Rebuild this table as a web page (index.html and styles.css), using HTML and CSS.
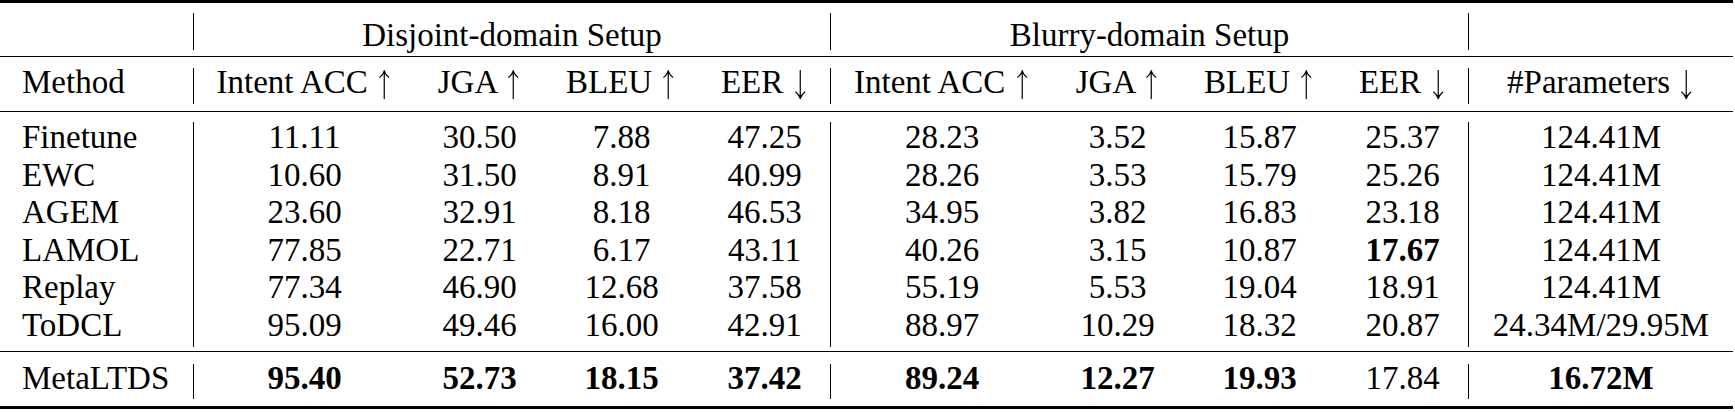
FILE: index.html
```html
<!DOCTYPE html>
<html lang="en">
<head>
    <meta charset="UTF-8">
    <meta name="viewport" content="width=device-width, initial-scale=1.0">
    <title>Continual Learning Results</title>
    <link rel="stylesheet" href="styles.css">
</head>
<body>
    <!-- arrow glyphs, reused below -->
    <svg class="defs" width="0" height="0">
        <symbol id="up" viewBox="0 0 16.5 29.3">
            <path d="M8.25 1.2 V29.3 M3.4 7.6 Q7.2 4.6 8.25 0.8 Q9.3 4.6 13.1 7.6" fill="none" stroke="#000" stroke-width="1.2"/>
        </symbol>
        <symbol id="down" viewBox="0 0 16.5 29.3">
            <path d="M8.25 0 V28.1 M3.4 21.7 Q7.2 24.7 8.25 28.5 Q9.3 24.7 13.1 21.7" fill="none" stroke="#000" stroke-width="1.2"/>
        </symbol>
    </svg>

    <div class="results">
        <!-- group titles -->
        <div class="group g-top">
            <div class="row">
                <div class="c name"></div>
                <div class="c sep span4">Disjoint-domain Setup</div>
                <div class="c sep span4">Blurry-domain Setup</div>
                <div class="c sep"></div>
            </div>
        </div>

        <!-- column titles -->
        <div class="group g-head">
            <div class="row">
                <div class="c name">Method</div>
                <div class="c sep">Intent ACC <svg class="arr"><use href="#up"/></svg></div>
                <div class="c">JGA <svg class="arr"><use href="#up"/></svg></div>
                <div class="c">BLEU <svg class="arr"><use href="#up"/></svg></div>
                <div class="c">EER <svg class="arr"><use href="#down"/></svg></div>
                <div class="c sep">Intent ACC <svg class="arr"><use href="#up"/></svg></div>
                <div class="c">JGA <svg class="arr"><use href="#up"/></svg></div>
                <div class="c">BLEU <svg class="arr"><use href="#up"/></svg></div>
                <div class="c">EER <svg class="arr"><use href="#down"/></svg></div>
                <div class="c sep">#Parameters <svg class="arr"><use href="#down"/></svg></div>
            </div>
        </div>

        <!-- baselines -->
        <div class="group g-body">
            <div class="row">
                <div class="c name">Finetune</div>
                <div class="c sep">11.11</div><div class="c">30.50</div><div class="c">7.88</div><div class="c">47.25</div>
                <div class="c sep">28.23</div><div class="c">3.52</div><div class="c">15.87</div><div class="c">25.37</div>
                <div class="c sep">124.41M</div>
            </div>
            <div class="row">
                <div class="c name">EWC</div>
                <div class="c sep">10.60</div><div class="c">31.50</div><div class="c">8.91</div><div class="c">40.99</div>
                <div class="c sep">28.26</div><div class="c">3.53</div><div class="c">15.79</div><div class="c">25.26</div>
                <div class="c sep">124.41M</div>
            </div>
            <div class="row">
                <div class="c name">AGEM</div>
                <div class="c sep">23.60</div><div class="c">32.91</div><div class="c">8.18</div><div class="c">46.53</div>
                <div class="c sep">34.95</div><div class="c">3.82</div><div class="c">16.83</div><div class="c">23.18</div>
                <div class="c sep">124.41M</div>
            </div>
            <div class="row">
                <div class="c name">LAMOL</div>
                <div class="c sep">77.85</div><div class="c">22.71</div><div class="c">6.17</div><div class="c">43.11</div>
                <div class="c sep">40.26</div><div class="c">3.15</div><div class="c">10.87</div><div class="c best">17.67</div>
                <div class="c sep">124.41M</div>
            </div>
            <div class="row">
                <div class="c name">Replay</div>
                <div class="c sep">77.34</div><div class="c">46.90</div><div class="c">12.68</div><div class="c">37.58</div>
                <div class="c sep">55.19</div><div class="c">5.53</div><div class="c">19.04</div><div class="c">18.91</div>
                <div class="c sep">124.41M</div>
            </div>
            <div class="row">
                <div class="c name">ToDCL</div>
                <div class="c sep">95.09</div><div class="c">49.46</div><div class="c">16.00</div><div class="c">42.91</div>
                <div class="c sep">88.97</div><div class="c">10.29</div><div class="c">18.32</div><div class="c">20.87</div>
                <div class="c sep">24.34M/29.95M</div>
            </div>
        </div>

        <!-- ours -->
        <div class="group g-ours">
            <div class="row">
                <div class="c name">MetaLTDS</div>
                <div class="c sep best">95.40</div><div class="c best">52.73</div><div class="c best">18.15</div><div class="c best">37.42</div>
                <div class="c sep best">89.24</div><div class="c best">12.27</div><div class="c best">19.93</div><div class="c">17.84</div>
                <div class="c sep best">16.72M</div>
            </div>
        </div>
    </div>
</body>
</html>
```

FILE: styles.css
```css
* {
    box-sizing: border-box;
}

body {
    margin: 0;
    padding: 0;
    background: #fff;
    color: #000;
    font-family: "Liberation Serif", "Times New Roman", serif;
    font-size: 33px;
}

.defs {
    position: absolute;
    width: 0;
    height: 0;
    overflow: hidden;
}

.results {
    width: 1733px;
    border-top: 3px solid #000;
    border-bottom: 3px solid #000;
}

.group {
    border-top: 1px solid #000;
}

.group:first-child {
    border-top: 0;
}

.row {
    display: grid;
    grid-template-columns: 193px 222px 129px 155px 131px 223px 129px 155px 131px 265px;
}

.c {
    text-align: center;
    white-space: nowrap;
    min-height: 0;
}

.c.name {
    text-align: left;
    padding-left: 22px;
}

.c.sep {
    border-left: 1px solid #000;
}

.span4 {
    grid-column: span 4;
}

.best {
    font-weight: 700;
}

.arr {
    width: 16.5px;
    height: 29.3px;
    vertical-align: -6.5px;
}

.g-top {
    padding: 10px 0 6px;
}

.g-top .row {
    grid-auto-rows: 37px;
}

.g-top .c {
    line-height: 29px;
    padding-top: 8px;
}

.g-head {
    padding: 11px 0 7px;
}

.g-head .row {
    grid-auto-rows: 36px;
}

.g-head .c {
    line-height: 28px;
}

.g-body {
    padding: 10px 0 4px;
}

.g-body .row {
    grid-auto-rows: 37.5px;
}

.g-body .c {
    line-height: 30.3px;
}

.g-ours {
    padding: 12px 0 7px;
}

.g-ours .row {
    grid-auto-rows: 35px;
}

.g-ours .c {
    line-height: 29.7px;
}
```
